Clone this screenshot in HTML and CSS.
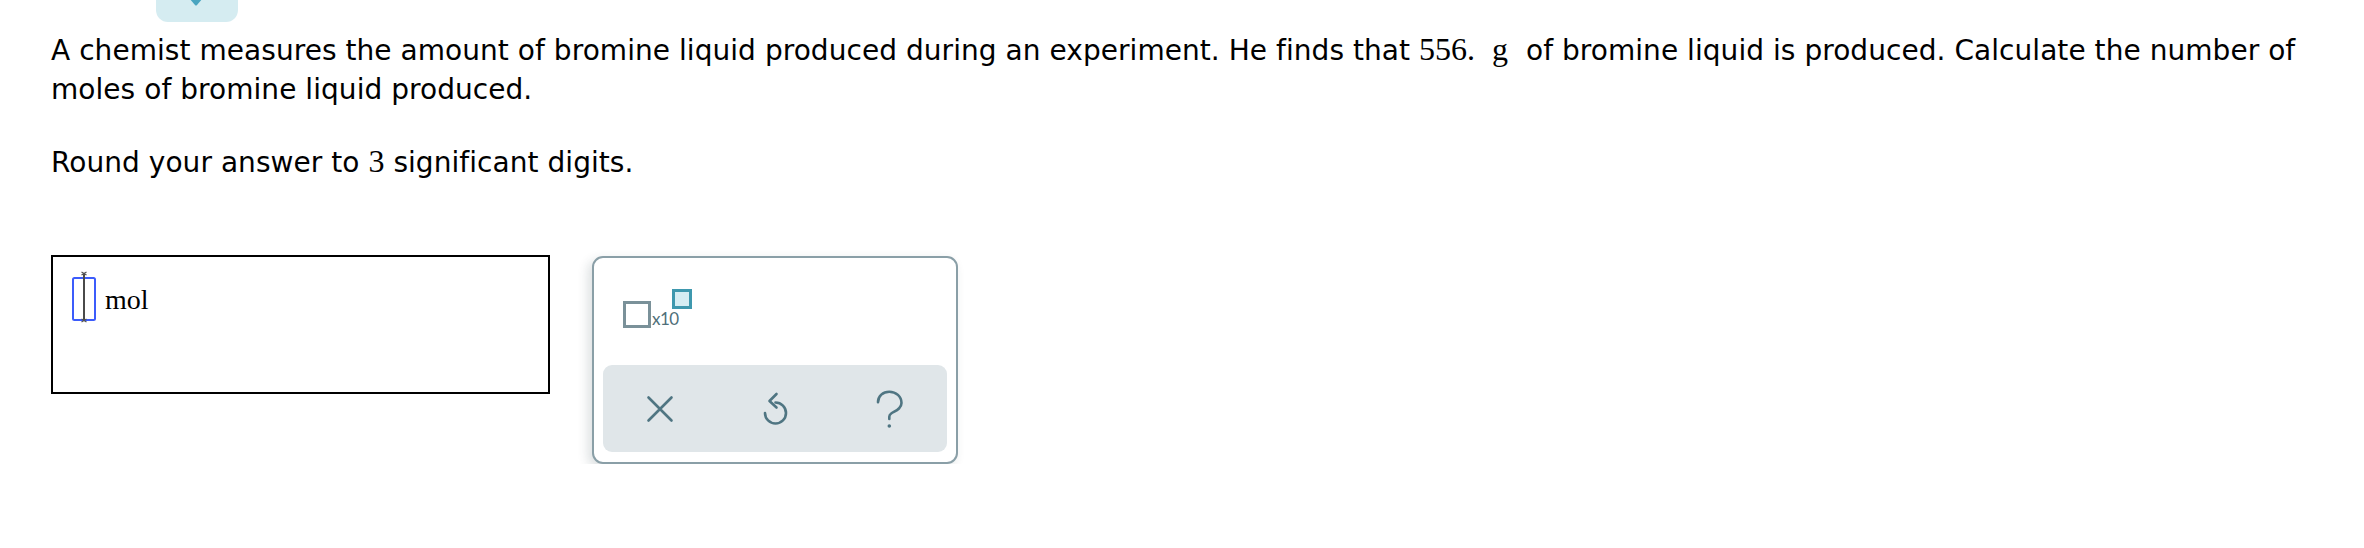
FILE: index.html
```html
<!DOCTYPE html>
<html>
<head>
<meta charset="utf-8">
<link rel="stylesheet" href="styles.css">
</head>
<body>
<div class="page">
  <div class="tab">
    <svg class="tab-arrow" width="16" height="8" viewBox="0 0 16 8"><path d="M1 -2 L15 -2 L8.8 5.2 Q8 6 7.2 5.2 Z" fill="#4aa5c0"/></svg>
  </div>
  <p class="question">A chemist measures the amount of bromine liquid produced during an experiment. He finds that <span class="math">556.</span><span class="math unit">g</span> of bromine liquid is produced. Calculate the number of moles of bromine liquid produced.</p>
  <p class="question second">Round your answer to <span class="math">3</span> significant digits.</p>
  <div class="answer-row">
    <div class="answer-box">
      <svg class="cursor" width="26" height="52" viewBox="0 0 26 52">
        <rect x="2" y="7" width="22" height="42" rx="1.5" fill="none" stroke="#3c5cfb" stroke-width="2"/>
        <line x1="13" y1="2" x2="13" y2="50" stroke="#4a4a4a" stroke-width="2"/>
        <path d="M10.5 1 L15.5 4 M15.5 1 L10.5 4 M10.5 48 L15.5 51 M15.5 48 L10.5 51" stroke="#555" stroke-width="1.2"/>
      </svg>
      <span class="unit-label">mol</span>
    </div>
    <div class="keypad">
      <div class="keypad-top">
        <div class="sci">
          <span class="sci-base"></span>
          <span class="sci-text">x10</span>
          <span class="sci-sup"></span>
        </div>
      </div>
      <div class="keypad-actions">
        <button class="action" type="button" aria-label="clear">
          <svg width="28" height="28" viewBox="0 0 28 28"><path d="M2.5 2.5 L25.5 25.5 M25.5 2.5 L2.5 25.5" stroke="#4f7582" stroke-width="2.6" stroke-linecap="round" fill="none"/></svg>
        </button>
        <button class="action" type="button" aria-label="undo">
          <svg width="30" height="34" viewBox="0 0 30 34"><path d="M15.5 10.5 A10.5 10.5 0 1 1 5 21" stroke="#4f7582" stroke-width="2.6" stroke-linecap="round" fill="none"/><path d="M16.5 2 L9.5 9 L16.5 15.5" stroke="#4f7582" stroke-width="2.6" stroke-linecap="round" stroke-linejoin="round" fill="none"/></svg>
        </button>
        <button class="action" type="button" aria-label="help">
          <svg width="30" height="40" viewBox="0 0 30 40"><path d="M3 13.3 C3 7 8 2.7 14.3 2.7 C21 2.7 26.5 7.5 26.5 14 C26.5 20 20 22 16.2 24.5 C14.8 25.4 14.3 26.3 14.3 27.8 V30" stroke="#4f7582" stroke-width="2.6" stroke-linecap="round" fill="none"/><circle cx="14.3" cy="37" r="1.8" fill="#4f7582"/></svg>
        </button>
      </div>
    </div>
  </div>
</div>
</body>
</html>
```

FILE: styles.css
```css
html, body {
  margin: 0;
  padding: 0;
  background: #ffffff;
}

.page {
  padding-left: 51px;
  font-family: "DejaVu Sans", Verdana, sans-serif;
  color: #000;
}

.tab {
  width: 82px;
  height: 22px;
  margin-left: 105px;
  background: #d5ecf1;
  border-radius: 0 0 12px 12px;
  display: flex;
  justify-content: center;
  align-items: flex-start;
}

.tab-arrow {
  display: block;
  margin-left: -2px;
}

.question {
  margin: 9px 0 0 0;
  font-size: 28px;
  line-height: 39px;
  letter-spacing: 0.05px;
  width: 2300px;
}

.question.second {
  margin-top: 34px;
}

.math {
  font-family: "Liberation Serif", "Times New Roman", serif;
  font-size: 32px;
  line-height: 0;
  letter-spacing: 0;
}

.unit {
  margin-left: 17px;
  margin-right: 9px;
}

.answer-row {
  display: flex;
  align-items: flex-start;
  margin-top: 73px;
}

.answer-box {
  box-sizing: border-box;
  width: 499px;
  height: 139px;
  border: 2px solid #000;
  display: flex;
  align-items: flex-start;
  padding: 14px 0 0 18px;
  gap: 8px;
}

.cursor {
  display: block;
}

.unit-label {
  font-family: "Liberation Serif", "Times New Roman", serif;
  font-size: 28px;
  line-height: 28px;
  margin-top: 15px;
}

.keypad {
  box-sizing: border-box;
  width: 366px;
  height: 208px;
  margin-left: 42px;
  margin-top: 1px;
  border: 2px solid #8a9fa7;
  border-radius: 11px;
  background: #fff;
  box-shadow: -4px 4px 11px rgba(40, 60, 70, 0.16);
  padding: 0 9px 10px 9px;
  display: flex;
  flex-direction: column;
}

.keypad-top {
  height: 107px;
}

.sci {
  display: flex;
  align-items: flex-start;
  margin: 31px 0 0 20px;
}

.sci-base {
  box-sizing: border-box;
  width: 28px;
  height: 27px;
  margin-top: 12px;
  border: 3px solid #7a9199;
}

.sci-text {
  font-family: "Lato", "Open Sans", sans-serif;
  font-size: 17px;
  line-height: 17px;
  color: #4f6f79;
  margin-top: 21px;
  margin-left: 1px;
  letter-spacing: -0.5px;
}

.sci-sup {
  box-sizing: border-box;
  width: 20px;
  height: 20px;
  margin-left: -7px;
  border: 3px solid #3e98ae;
  background: #d5edf3;
}

.keypad-actions {
  flex: 1;
  background: #e0e6e9;
  border-radius: 9px;
  display: grid;
  grid-template-columns: 1fr 1fr 1fr;
  align-items: center;
  justify-items: center;
}

.action {
  border: 0;
  background: transparent;
  padding: 0;
  margin: 0;
  display: flex;
  align-items: center;
  justify-content: center;
}

.action svg {
  display: block;
}
```
